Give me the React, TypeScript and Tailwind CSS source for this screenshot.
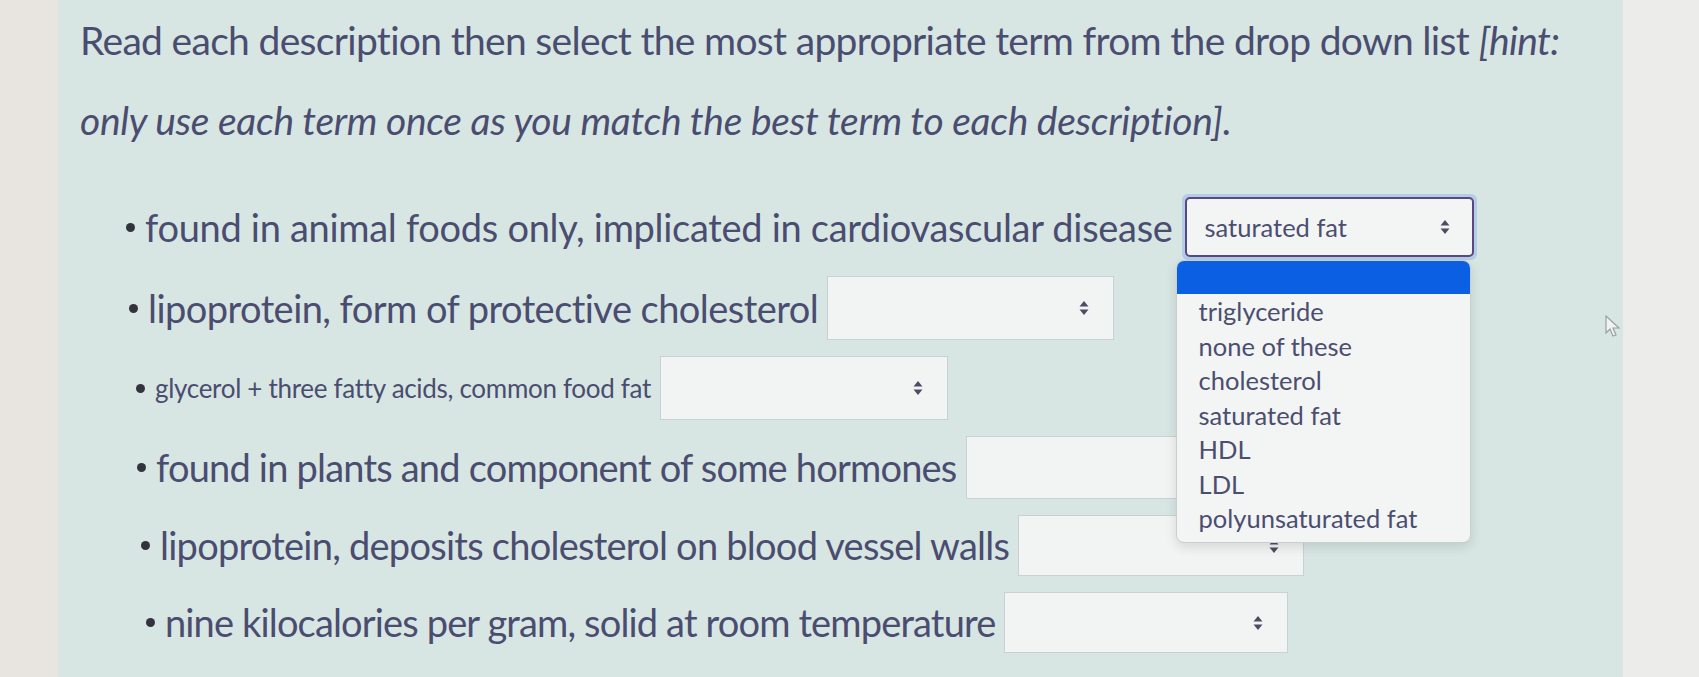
import React from "react";

const font = { fontFamily: "Lato, 'Open Sans', sans-serif" };

function Arrows() {
  return (
    <svg width="10" height="16" viewBox="0 0 10 16" className="shrink-0">
      <path d="M5 1 L9.5 6.5 L0.5 6.5 Z" fill="#4a4d66" />
      <path d="M5 15 L9.5 9.5 L0.5 9.5 Z" fill="#4a4d66" />
    </svg>
  );
}

function Select({ w, h = 63, value, focused }: { w: number; h?: number; value?: string; focused?: boolean }) {
  if (focused) {
    return (
      <div className="relative shrink-0 rounded-[6px] bg-[#b3cce8] p-[3px]" style={{ width: w }}>
        <div className="flex h-[60px] items-center justify-between rounded-[5px] border-2 border-[#5a4884] bg-[#f3f5f4] pl-[18px] pr-[22px]">
          <span className="text-[25.5px] text-[#4b4e70]">{value}</span>
          <Arrows />
        </div>
      </div>
    );
  }
  return (
    <div
      className="flex shrink-0 items-center justify-end border border-[#c8d2d2] bg-[#f2f4f3] pr-[24px]"
      style={{ width: w, height: h }}
    >
      <Arrows />
    </div>
  );
}

function Bullet({ text, cls, children, pl }: { text: string; cls: string; children: React.ReactNode; pl: string }) {
  return (
    <div className={`flex items-center ${pl}`}>
      <span className="mr-[10px] h-[9px] w-[9px] shrink-0 rounded-full bg-[#33333f]" />
      <span className={`${cls} mr-[9px] whitespace-nowrap text-[#4a4d70]`}>{text}</span>
      {children}
    </div>
  );
}

export default function App() {
  const options = ["triglyceride", "none of these", "cholesterol", "saturated fat", "HDL", "LDL", "polyunsaturated fat"];
  return (
    <div className="relative flex h-[677px] w-[1699px] overflow-hidden" style={font}>
      <div className="w-[58px] shrink-0 bg-[#e8e5e0]" />
      <div className="relative flex-1 bg-[#d8e6e3] pl-[22px] pt-0">
        <p className="text-[39px] leading-[80px] tracking-[-0.68px] text-[#4a4d70]">
          Read each description then select the most appropriate term from the drop down list <i>[hint:</i>
        </p>
        <p className="text-[39px] leading-[80px] tracking-[-0.3px] text-[#4a4d70]">
          <i>only use each term once as you match the best term to each description].</i>
        </p>
        <div className="mt-[34px] flex flex-col gap-[16px]">
          <Bullet pl="pl-[46px]" cls="text-[38px] tracking-[-0.3px]" text="found in animal foods only, implicated in cardiovascular disease">
            <div className="relative">
              <Select w={295} focused value="saturated fat" />
              <div className="absolute left-[-6px] top-[66px] z-10 w-[295px] overflow-hidden rounded-[8px] border border-[#c9cfcf] bg-[#f3f5f4] pb-[6px] shadow-[0_4px_12px_rgba(0,0,0,0.12)]">
                <div className="h-[33px] bg-[#0b5fe3]" />
                {options.map((o) => (
                  <div key={o} className="pl-[22px] text-[25.5px] leading-[34.5px] text-[#4b4e70]">
                    {o}
                  </div>
                ))}
              </div>
            </div>
          </Bullet>
          <Bullet pl="pl-[49px]" cls="text-[38px] tracking-[-0.55px]" text="lipoprotein, form of protective cholesterol">
            <Select w={287} h={64} />
          </Bullet>
          <Bullet pl="pl-[56px]" cls="text-[26px] tracking-[-0.3px]" text="glycerol + three fatty acids, common food fat">
            <Select w={288} h={64} />
          </Bullet>
          <Bullet pl="pl-[57px]" cls="text-[38px] tracking-[-0.8px]" text="found in plants and component of some hormones">
            <Select w={287} h={63} />
          </Bullet>
          <Bullet pl="pl-[61px]" cls="text-[38px] tracking-[-0.75px]" text="lipoprotein, deposits cholesterol on blood vessel walls">
            <Select w={286} h={61} />
          </Bullet>
          <Bullet pl="pl-[66px]" cls="text-[38px] tracking-[-0.85px]" text="nine kilocalories per gram, solid at room temperature">
            <Select w={284} h={61} />
          </Bullet>
        </div>
      </div>
      <div className="relative w-[76px] shrink-0 bg-[#ecedeb]">
        <svg className="absolute left-[-18px] top-[315px]" width="18" height="24" viewBox="0 0 18 24">
          <path d="M1 1 L1 18 L5 14 L8 21 L11 20 L8 13 L14 13 Z" fill="#f2f2f2" stroke="#9aa0a0" strokeWidth="1.2" />
        </svg>
      </div>
    </div>
  );
}
